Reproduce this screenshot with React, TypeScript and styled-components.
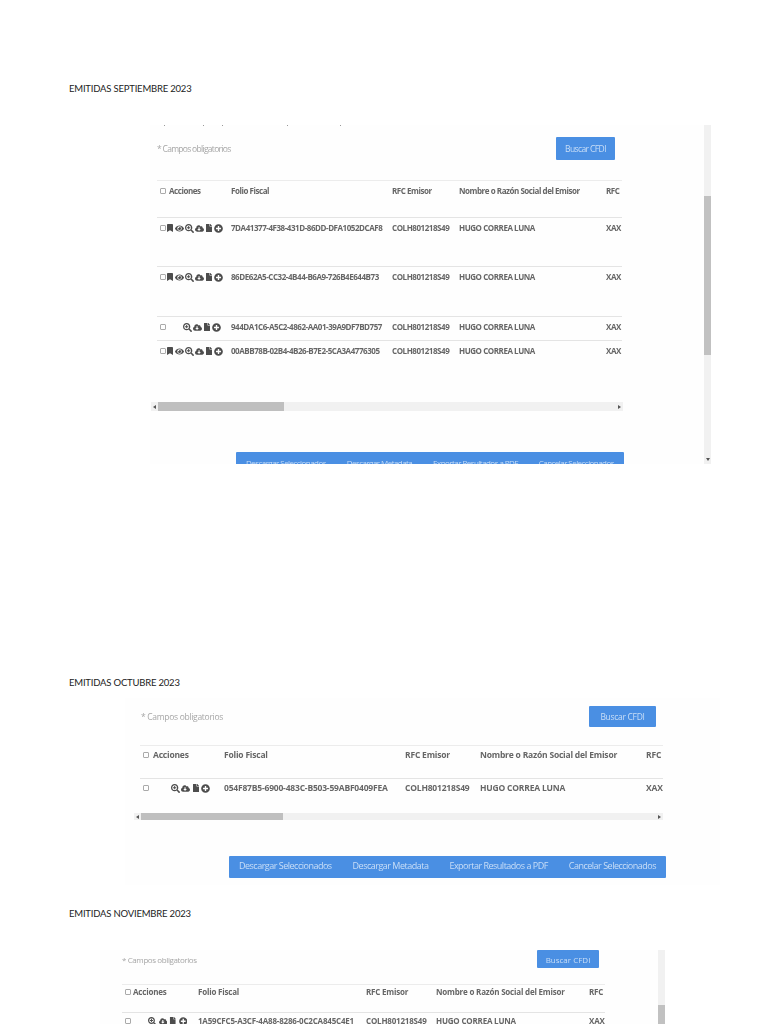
import React from "react";
import styled, { createGlobalStyle } from "styled-components";
import { FaBookmark, FaEye, FaSearchPlus, FaCloudDownloadAlt, FaFile, FaPlusCircle } from "react-icons/fa";

const Global = createGlobalStyle`
  html, body { margin: 0; padding: 0; background: #fff; }
  #root { width: 768px; }
`;

const Page = styled.div`
  width: 768px; height: 1024px; overflow: hidden; background: #fff;
  padding-top: 82px; box-sizing: border-box;
`;
const Heading = styled.h2<{ $mt: number }>`
  margin: ${p => p.$mt}px 0 0 69px; height: 14px;
  font: 400 9.5px/14px Lato, "Liberation Sans", sans-serif; letter-spacing: -0.2px; color: #222; white-space: nowrap;
`;
const Panel = styled.section<{ $mt: number; $ml: number; $h: number }>`
  margin: ${p => p.$mt}px 0 0 ${p => p.$ml}px; height: ${p => p.$h}px;
  display: flex; width: max-content; overflow: hidden; background: #fefefe;
`;
const Content = styled.div<{ $w: number; $pt: number }>`
  width: ${p => p.$w}px; padding-top: ${p => p.$pt}px; box-sizing: border-box;
  font-family: "Open Sans", "Liberation Sans", sans-serif; filter: blur(0.45px); overflow: hidden;
`;
const ClippedTop = styled.div`
  display: flex; height: 2px; margin-bottom: 10px;
`;
const Speck = styled.i<{ $ml: number }>`
  width: 1px; height: 1px; background: #999; margin-left: ${p => p.$ml}px;
`;
const Toolbar = styled.div<{ $pl: number; $pr: number; $h: number }>`
  display: flex; align-items: center; justify-content: space-between;
  height: ${p => p.$h}px; padding: 0 ${p => p.$pr}px 0 ${p => p.$pl}px;
`;
const Note = styled.span<{ $fs: number; $ls: number }>`
  font-size: ${p => p.$fs}px; letter-spacing: ${p => p.$ls}px; color: #a6a6a6; white-space: nowrap;
`;
const SearchButton = styled.div<{ $w: number; $fs: number; $ls: number }>`
  width: ${p => p.$w}px; height: 100%; display: flex; align-items: center; justify-content: center;
  background: #4a8fe3; border-radius: 1px; color: #c9def7;
  font-size: ${p => p.$fs}px; letter-spacing: ${p => p.$ls}px;
`;
const Table = styled.div<{ $mt: number; $ml: number; $w: number }>`
  margin: ${p => p.$mt}px 0 0 ${p => p.$ml}px; width: ${p => p.$w}px; overflow: hidden;
  border-top: 1px solid #ececec; box-sizing: border-box;
`;
const Row = styled.div<{ $cols: string; $h: number; $pt: number; $fs: number; $ls: number; $line?: boolean }>`
  display: grid; grid-template-columns: ${p => p.$cols}; height: ${p => p.$h}px; box-sizing: border-box;
  padding-top: ${p => p.$pt}px; font-size: ${p => p.$fs}px; line-height: 12px; font-weight: 700;
  letter-spacing: ${p => p.$ls}px; color: #666; white-space: nowrap;
  border-bottom: ${p => (p.$line ? "1px solid #e4e4e4" : "0")};
`;
const ActionCell = styled.div<{ $w: number }>`
  width: ${p => p.$w}px; display: flex; align-items: center; justify-content: space-between; height: 12px;
  box-sizing: border-box; padding-left: 3px;
`;
const HeadAction = styled.div<{ $gap: number }>`
  display: flex; align-items: center; gap: ${p => p.$gap}px; height: 12px; padding-left: 3px;
`;
const Check = styled.span`
  width: 4px; height: 4px; border: 1px solid #aaa; flex: none; border-radius: 1px;
`;
const Icons = styled.span<{ $gap: number; $size: number }>`
  display: flex; align-items: center; gap: ${p => p.$gap}px; color: #4d4d4d; font-size: ${p => p.$size}px;
`;
const Track = styled.div<{ $mt: number; $ml: number; $w: number; $h: number }>`
  display: flex; align-items: center; justify-content: space-between;
  margin: ${p => p.$mt}px 0 0 ${p => p.$ml}px; width: ${p => p.$w}px; height: ${p => p.$h}px;
  background: #f1f1f1;
`;
const Thumb = styled.div<{ $w: number }>`
  width: ${p => p.$w}px; height: 100%; background: #bfbfbf;
`;
const Arrow = styled.span<{ $dir: "left" | "right" }>`
  width: 0; height: 0; margin: 0 2px; border-style: solid; border-width: 2px 0 2px 3px;
  border-color: transparent transparent transparent #555;
  transform: ${p => (p.$dir === "left" ? "rotate(180deg)" : "none")};
`;
const TrackStart = styled.div`
  display: flex; align-items: center; height: 100%;
`;
const ActionBar = styled.div<{ $mt: number; $ml: number; $w: number; $h: number; $fs: number; $ls: number; $pt: number }>`
  margin: ${p => p.$mt}px 0 0 ${p => p.$ml}px; width: ${p => p.$w}px; height: ${p => p.$h}px;
  box-sizing: border-box; padding: ${p => p.$pt}px 10px 0 10px; display: flex; justify-content: space-between;
  background: #4a8fe3; color: #c9def7; font-size: ${p => p.$fs}px; letter-spacing: ${p => p.$ls}px;
  line-height: 12px; white-space: nowrap; border-radius: 1px; flex: none;
`;
const VScroll = styled.div`
  width: 7px; height: 100%; background: #f1f1f1; display: flex; flex-direction: column;
  filter: blur(0.3px);
`;
const VThumb = styled.div<{ $mt: number; $h: number }>`
  margin-top: ${p => p.$mt}px; height: ${p => p.$h}px; background: #c1c1c1; flex: none;
`;
const VArrow = styled.span`
  margin: auto auto 3px; width: 0; height: 0; border-style: solid; border-width: 3px 2px 0 2px;
  border-color: #555 transparent transparent transparent;
`;

type Cfg = {
  cols: string; actW: number; fs: number; ls: number; iconSize: number; iconGap: number;
  headPt: number; rowPt: number; headGap: number;
};

const ActionIcons = ({ full, c }: { full: boolean; c: Cfg }) => (
  <ActionCell $w={c.actW}>
    <Check />
    <Icons $gap={c.iconGap} $size={c.iconSize}>
      {full && <FaBookmark size={c.iconSize - 1} />}
      {full && <FaEye />}
      <FaSearchPlus />
      <FaCloudDownloadAlt />
      <FaFile size={c.iconSize - 1} />
      <FaPlusCircle />
    </Icons>
  </ActionCell>
);

const HeaderRow = ({ c, h }: { c: Cfg; h: number }) => (
  <Row $cols={c.cols} $h={h} $pt={c.headPt} $fs={c.fs} $ls={c.ls} $line>
    <HeadAction $gap={c.headGap}><Check /><span>Acciones</span></HeadAction>
    <span>Folio Fiscal</span>
    <span>RFC Emisor</span>
    <span>Nombre o Razón Social del Emisor</span>
    <span>RFC</span>
  </Row>
);
const DataRow = ({ c, h, folio, full, line }: { c: Cfg; h: number; folio: string; full: boolean; line: boolean }) => (
  <Row $cols={c.cols} $h={h} $pt={c.rowPt} $fs={c.fs} $ls={c.ls} $line={line}>
    <ActionIcons full={full} c={c} />
    <span>{folio}</span>
    <span>COLH801218S49</span>
    <span>HUGO CORREA LUNA</span>
    <span>XAX</span>
  </Row>
);

const c1: Cfg = { cols: "74px 161px 67px 147px 20px", actW: 64, fs: 8, ls: -0.45, iconSize: 9, iconGap: 1, headPt: 4, rowPt: 4, headGap: 3 };
const c2: Cfg = { cols: "84px 181px 75px 166px 20px", actW: 70, fs: 8.5, ls: -0.2, iconSize: 9, iconGap: 1.5, headPt: 3, rowPt: 3, headGap: 4 };
const c3: Cfg = { cols: "76px 168px 70px 153px 20px", actW: 65, fs: 8, ls: -0.2, iconSize: 8.5, iconGap: 2, headPt: 1, rowPt: 2, headGap: 2 };

const Bar = (p: { mt: number; ml: number; w: number; h: number; fs: number; ls: number; pt: number }) => (
  <ActionBar $mt={p.mt} $ml={p.ml} $w={p.w} $h={p.h} $fs={p.fs} $ls={p.ls} $pt={p.pt}>
    <span>Descargar Seleccionados</span>
    <span>Descargar Metadata</span>
    <span>Exportar Resultados a PDF</span>
    <span>Cancelar Seleccionados</span>
  </ActionBar>
);

const HBar = (p: { mt: number; ml: number; w: number; h: number; thumb: number }) => (
  <Track $mt={p.mt} $ml={p.ml} $w={p.w} $h={p.h}>
    <TrackStart>
      <Arrow $dir="left" />
      <Thumb $w={p.thumb} />
    </TrackStart>
    <Arrow $dir="right" />
  </Track>
);

export default function App() {
  return (
    <Page>
      <Global />
      <Heading $mt={0}>EMITIDAS SEPTIEMBRE 2023</Heading>
      <Panel $mt={29} $ml={150} $h={339}>
        <Content $w={554} $pt={0}>
          <ClippedTop>
            <Speck $ml={14} /><Speck $ml={38} /><Speck $ml={18} /><Speck $ml={64} /><Speck $ml={52} />
          </ClippedTop>
          <Toolbar $pl={7} $pr={89} $h={23}>
            <Note $fs={8.5} $ls={-0.7}>* Campos obligatorios</Note>
            <SearchButton $w={59} $fs={8.5} $ls={-0.6}>Buscar CFDI</SearchButton>
          </Toolbar>
          <Table $mt={20} $ml={7} $w={465}>
            <HeaderRow c={c1} h={37} />
            <DataRow c={c1} h={49} folio="7DA41377-4F38-431D-86DD-DFA1052DCAF8" full line />
            <DataRow c={c1} h={50} folio="86DE62A5-CC32-4B44-B6A9-726B4E644B73" full line />
            <DataRow c={c1} h={24} folio="944DA1C6-A5C2-4862-AA01-39A9DF7BD757" full={false} line />
            <DataRow c={c1} h={23} folio="00ABB78B-02B4-4B26-B7E2-5CA3A4776305" full line={false} />
          </Table>
          <HBar mt={38} ml={1} w={472} h={9} thumb={126} />
          <Bar mt={41} ml={86} w={388} h={30} fs={8} ls={-0.55} pt={5} />
        </Content>
        <VScroll>
          <VThumb $mt={71} $h={159} />
          <VArrow />
        </VScroll>
      </Panel>

      <Heading $mt={212}>EMITIDAS OCTUBRE 2023</Heading>
      <Panel $mt={8} $ml={125} $h={187}>
        <Content $w={595} $pt={8}>
          <Toolbar $pl={16} $pr={64} $h={21}>
            <Note $fs={8.5} $ls={-0.3}>* Campos obligatorios</Note>
            <SearchButton $w={67} $fs={8.5} $ls={-0.3}>Buscar CFDI</SearchButton>
          </Toolbar>
          <Table $mt={18} $ml={15} $w={523}>
            <HeaderRow c={c2} h={33} />
            <DataRow c={c2} h={34} folio="054F87B5-6900-483C-B503-59ABF0409FEA" full={false} line={false} />
          </Table>
          <HBar mt={0} ml={9} w={529} h={7} thumb={142} />
          <Bar mt={36} ml={104} w={437} h={22} fs={9} ls={-0.5} pt={4} />
        </Content>
      </Panel>

      <Heading $mt={22}>EMITIDAS NOVIEMBRE 2023</Heading>
      <Panel $mt={29} $ml={100} $h={80}>
        <Content $w={558} $pt={0}>
          <Toolbar $pl={22} $pr={59} $h={18}>
            <Note $fs={8} $ls={-0.4}>* Campos obligatorios</Note>
            <SearchButton $w={62} $fs={8} $ls={0}>Buscar CFDI</SearchButton>
          </Toolbar>
          <Table $mt={16} $ml={22} $w={483}>
            <HeaderRow c={c3} h={28} />
            <DataRow c={c3} h={30} folio="1A59CFC5-A3CF-4A88-8286-0C2CA845C4E1" full={false} line={false} />
          </Table>
        </Content>
        <VScroll>
          <VThumb $mt={55} $h={25} />
        </VScroll>
      </Panel>
    </Page>
  );
}
